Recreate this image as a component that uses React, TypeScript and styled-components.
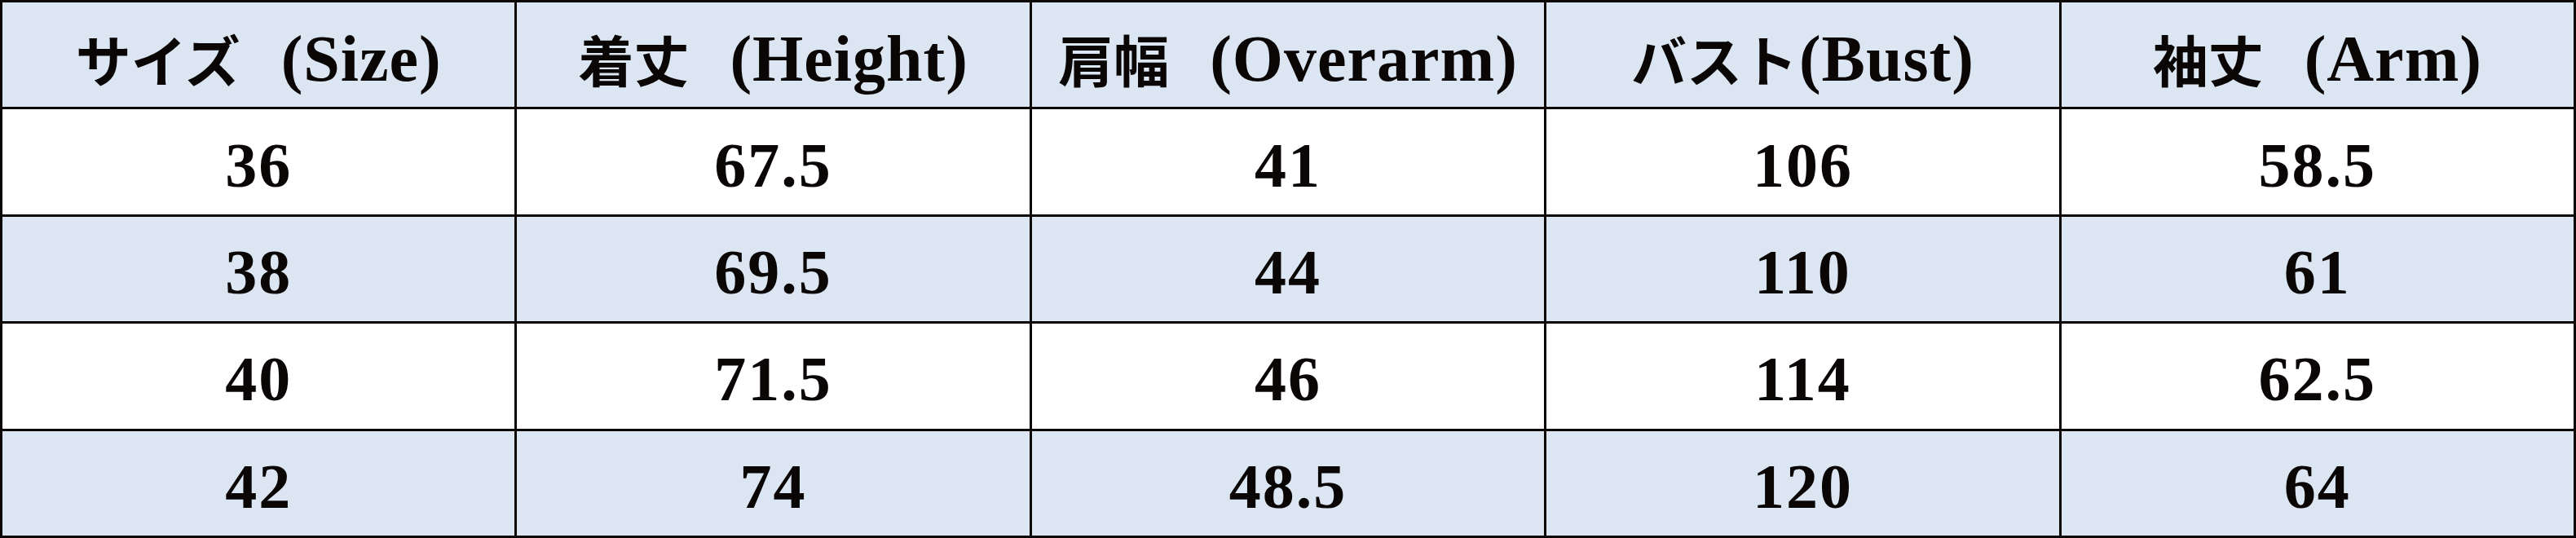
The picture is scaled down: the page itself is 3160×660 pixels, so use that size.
import styled, { createGlobalStyle } from "styled-components";

const GlobalStyle = createGlobalStyle`
  html, body {
    margin: 0;
    padding: 0;
    background: #ffffff;
  }
`;

interface IHeader {
  jp: string;
  en: string;
  spaced: boolean;
}

const headers: IHeader[] = [
  { jp: "サイズ", en: "(Size)", spaced: true },
  { jp: "着丈", en: "(Height)", spaced: true },
  { jp: "肩幅", en: "(Overarm)", spaced: true },
  { jp: "バスト", en: "(Bust)", spaced: false },
  { jp: "袖丈", en: "(Arm)", spaced: true },
];

const rows = [
  ["36", "67.5", "41", "106", "58.5"],
  ["38", "69.5", "44", "110", "61"],
  ["40", "71.5", "46", "114", "62.5"],
  ["42", "74", "48.5", "120", "64"],
];

const Table = styled.div`
  width: 3160px;
  height: 660px;
  box-sizing: border-box;
  display: grid;
  grid-template-columns: repeat(5, 1fr);
  grid-template-rows: repeat(5, 1fr);
  border-top: 3px solid #0a0606;
  border-left: 3px solid #0a0606;
  color: #0a0606;
  font-family: "Liberation Serif", "Noto Sans CJK JP", serif;
  font-weight: 700;
`;

const Cell = styled.div<{ $shaded: boolean; $head?: boolean }>`
  display: flex;
  align-items: center;
  justify-content: center;
  box-sizing: border-box;
  border-right: 3px solid #0a0606;
  border-bottom: 3px solid #0a0606;
  background: ${(p) => (p.$shaded ? "#dce6f2" : "#ffffff")};
  padding-top: ${(p) => (p.$head ? "10px" : "8px")};
  font-size: 78px;
  letter-spacing: 2px;
  line-height: 1;
  white-space: nowrap;
`;

const Jp = styled.span`
  font-family: "Noto Sans CJK JP", sans-serif;
  font-weight: 700;
  font-size: 68px;
  letter-spacing: 0;
`;

const En = styled.span<{ $spaced: boolean }>`
  margin-left: ${(p) => (p.$spaced ? "50px" : "2px")};
  font-size: 80px;
  letter-spacing: 1px;
`;

export default function App() {
  return (
    <>
      <GlobalStyle />
      <Table>
        {headers.map((h) => (
          <Cell key={h.en} $shaded $head>
            <Jp>{h.jp}</Jp>
            <En $spaced={h.spaced}>{h.en}</En>
          </Cell>
        ))}
        {rows.map((row, i) =>
          row.map((value, j) => (
            <Cell key={`${i}-${j}`} $shaded={i % 2 === 1}>
              {value}
            </Cell>
          ))
        )}
      </Table>
    </>
  );
}
